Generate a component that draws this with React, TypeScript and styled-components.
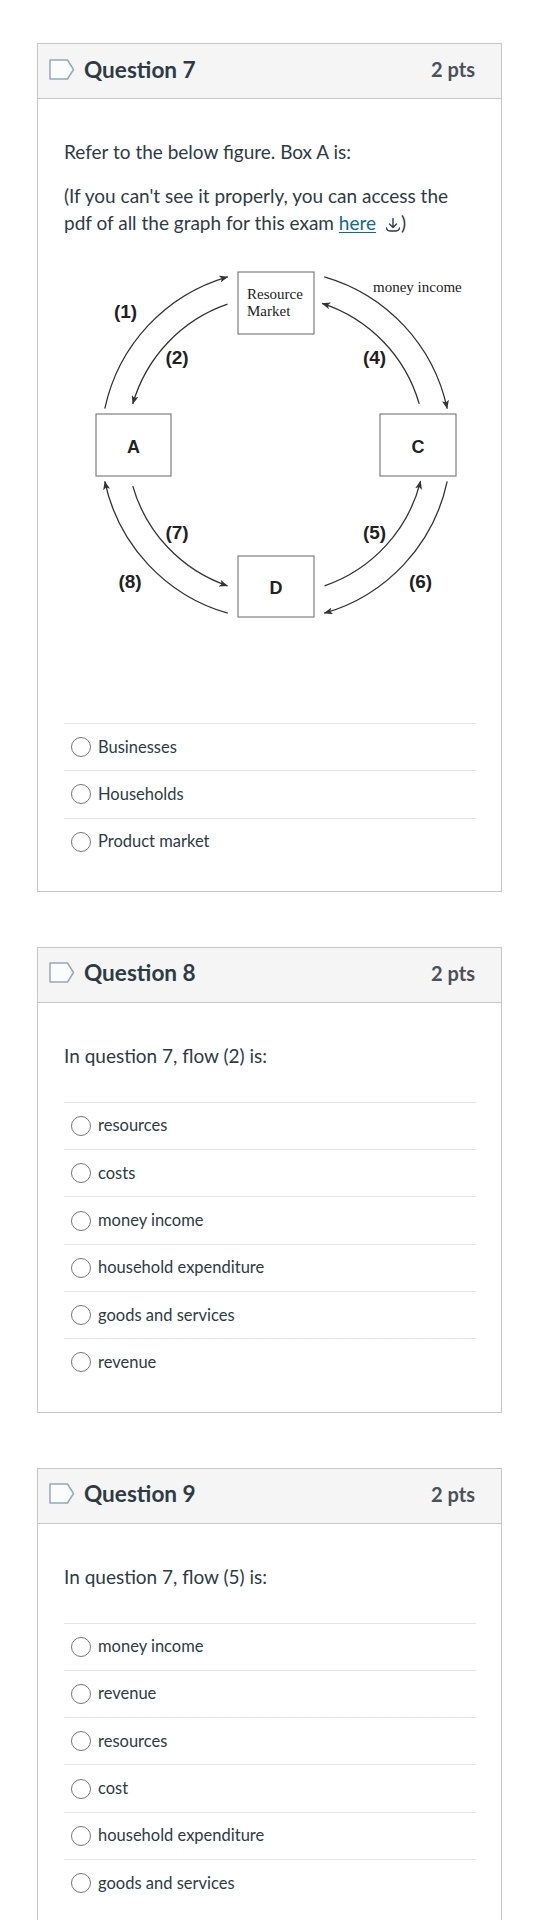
import React from "react";
import styled, { createGlobalStyle } from "styled-components";

const GlobalStyle = createGlobalStyle`
  body {
    margin: 0;
    background: #ffffff;
    font-family: Lato, "Open Sans", sans-serif;
    color: #2d3b45;
  }
`;

const Page = styled.div`
  padding: 43px 37px 0 37px;
  display: flex;
  flex-direction: column;
  gap: 55px;
`;

const Card = styled.div`
  border: 1px solid #c4c7ca;
  background: #fff;
`;

const Header = styled.div`
  height: 55px;
  box-sizing: border-box;
  padding: 0 26px 4px 11px;
  background: #f5f5f5;
  border-bottom: 1px solid #c4c7ca;
  display: flex;
  align-items: center;
`;

const Title = styled.div`
  margin-left: 9px;
  font-size: 22.6px;
  font-weight: 700;
  color: #2d3b45;
  flex: 1;
`;

const Points = styled.div`
  font-size: 20px;
  font-weight: 700;
  color: #4a5157;
`;

const Body = styled.div`
  padding: 39px 25px 26px 26px;
`;

const QuestionText = styled.div`
  max-width: 399px;
  margin-bottom: 33px;
  font-size: 19px;
  line-height: 27px;

  p {
    margin: 0;
  }
  p + p {
    margin-top: 17px;
  }
`;

const Link = styled.a`
  color: #0f6a8b;
  text-decoration: underline;
  text-underline-offset: 2px;
`;

const DownloadIcon = styled.svg`
  width: 16px;
  height: 15px;
  margin-left: 9px;
  vertical-align: -2px;
`;

const Figure = styled.svg`
  display: block;
  width: 399px;
  height: 437px;
  margin-top: 17px;
`;

const AnswerList = styled.div`
  display: flex;
  flex-direction: column;
`;

const AnswerRow = styled.label`
  display: flex;
  align-items: center;
  gap: 7px;
  padding: 10.65px 0 10.65px 7px;
  border-top: 1px solid #e3e5e7;
  font-size: 16.5px;
  line-height: 25px;
  color: #2d3b45;
`;

const Radio = styled.span`
  width: 20px;
  height: 20px;
  box-sizing: border-box;
  border: 1.4px solid #777;
  border-radius: 50%;
  background: #fff;
  flex-shrink: 0;
`;

const QuestionIcon = () => (
  <svg width="26" height="21" viewBox="0 0 26 21">
    <path
      d="M1 1 H18.5 L24.5 10.5 L18.5 20 H1 Z"
      fill="#fbfcfd"
      stroke="#93a9bb"
      strokeWidth="1.5"
      strokeLinejoin="round"
    />
  </svg>
);

const CX = 212;
const CY = 192;

const pt = (r: number, deg: number) => {
  const a = (deg * Math.PI) / 180;
  return [CX + r * Math.cos(a), CY + r * Math.sin(a)];
};

const arc = (r: number, a0: number, a1: number) => {
  const [x0, y0] = pt(r, a0);
  const [x1, y1] = pt(r, a1);
  const sweep = a1 > a0 ? 1 : 0;
  return `M${x0} ${y0} A${r} ${r} 0 0 ${sweep} ${x1} ${y1}`;
};

// radius, start angle, end angle (degrees, y down)
const flows: [number, number, number][] = [
  [175, 192, 254],
  [175, 286, 348],
  [175, 12, 74],
  [175, 106, 168],
  [149, 251, 196],
  [149, 344, 288],
  [149, 164, 109],
  [149, 71, 14],
];

const labels: [string, number, number][] = [
  ["(1)", 61.5, 65],
  ["(2)", 113, 111],
  ["(4)", 310.5, 111],
  ["(7)", 113, 286],
  ["(5)", 310.5, 286],
  ["(8)", 66, 335],
  ["(6)", 356.5, 335],
];

const CircularFlow = () => (
  <Figure viewBox="0 0 399 437">
    <defs>
      <marker
        id="ah"
        viewBox="0 0 10 8"
        refX="9.5"
        refY="4"
        markerWidth="9"
        markerHeight="7"
        markerUnits="userSpaceOnUse"
        orient="auto"
      >
        <path d="M0 0 L10 4 L0 8 L2.5 4 Z" fill="#333" />
      </marker>
    </defs>
    {flows.map(([r, a0, a1], i) => (
      <path
        key={i}
        d={arc(r, a0, a1)}
        fill="none"
        stroke="#333"
        strokeWidth="1.3"
        markerEnd="url(#ah)"
      />
    ))}
    <rect x="174" y="19" width="76" height="62" fill="#fff" stroke="#666" />
    <rect x="32" y="161" width="75" height="62" fill="#fff" stroke="#666" />
    <rect x="316" y="161" width="76" height="62" fill="#fff" stroke="#666" />
    <rect x="174" y="303" width="76" height="61" fill="#fff" stroke="#666" />
    <g fontFamily="'Liberation Serif', serif" fontSize="15" fill="#222">
      <text x="183" y="46">Resource</text>
      <text x="183" y="63">Market</text>
      <text x="309" y="39">money income</text>
    </g>
    <g
      fontFamily="'Liberation Sans', Arial, sans-serif"
      fontWeight="700"
      fill="#222"
      textAnchor="middle"
    >
      <text x="69.5" y="200" fontSize="18">A</text>
      <text x="354" y="200" fontSize="18">C</text>
      <text x="212" y="341" fontSize="18">D</text>
      {labels.map(([t, x, y]) => (
        <text key={t} x={x} y={y} fontSize="19">
          {t}
        </text>
      ))}
    </g>
  </Figure>
);

type Question = {
  number: number;
  text: React.ReactNode;
  answers: string[];
};

const questions: Question[] = [
  {
    number: 7,
    text: (
      <>
        <p>Refer to the below figure. Box A is:</p>
        <p>
          (If you can't see it properly, you can access the pdf of all the
          graph for this exam <Link href="#">here</Link>
          <DownloadIcon viewBox="0 0 16 15">
            <path
              d="M8 1.5 V10.5 M4.5 7 L8 10.5 L11.5 7"
              fill="none"
              stroke="#2d3b45"
              strokeWidth="1.4"
              strokeLinecap="round"
              strokeLinejoin="round"
            />
            <path
              d="M1.5 11 Q2 14 5 14 H11 Q14 14 14.5 11"
              fill="none"
              stroke="#2d3b45"
              strokeWidth="1.3"
              strokeLinecap="round"
            />
          </DownloadIcon>
          )
        </p>
        <CircularFlow />
      </>
    ),
    answers: ["Businesses", "Households", "Product market"],
  },
  {
    number: 8,
    text: <p>In question 7, flow (2) is:</p>,
    answers: [
      "resources",
      "costs",
      "money income",
      "household expenditure",
      "goods and services",
      "revenue",
    ],
  },
  {
    number: 9,
    text: <p>In question 7, flow (5) is:</p>,
    answers: [
      "money income",
      "revenue",
      "resources",
      "cost",
      "household expenditure",
      "goods and services",
    ],
  },
];

function App() {
  return (
    <>
      <GlobalStyle />
      <Page>
        {questions.map((q) => (
          <Card key={q.number}>
            <Header>
              <QuestionIcon />
              <Title>Question {q.number}</Title>
              <Points>2 pts</Points>
            </Header>
            <Body>
              <QuestionText>{q.text}</QuestionText>
              <AnswerList>
                {q.answers.map((a) => (
                  <AnswerRow key={a}>
                    <Radio />
                    {a}
                  </AnswerRow>
                ))}
              </AnswerList>
            </Body>
          </Card>
        ))}
      </Page>
    </>
  );
}

export default App;
